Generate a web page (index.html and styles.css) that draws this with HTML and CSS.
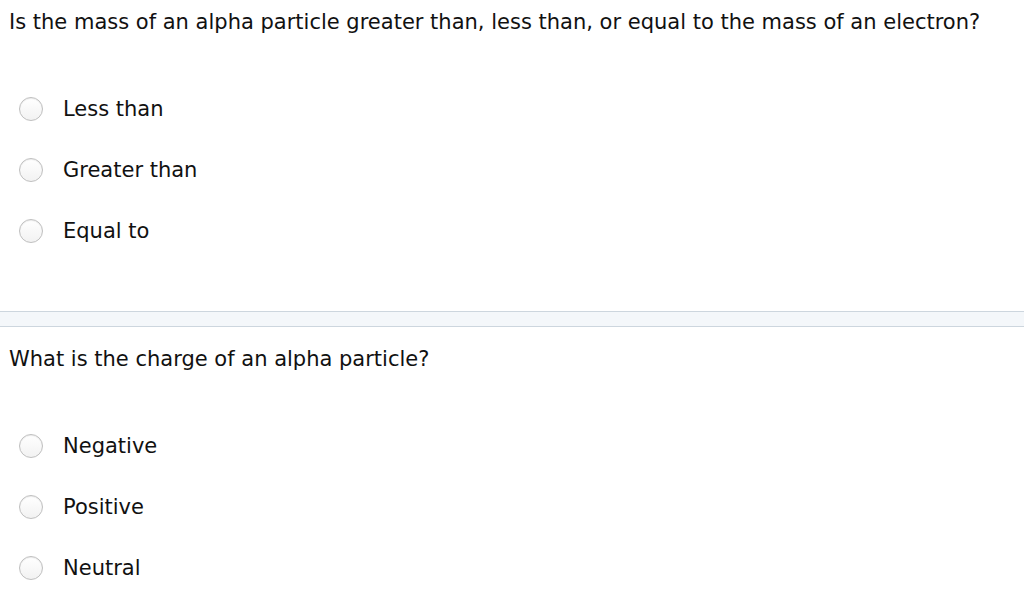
FILE: index.html
```html
<!DOCTYPE html>
<html>
<head>
<meta charset="utf-8">
<link rel="stylesheet" href="styles.css">
</head>
<body>
<section class="question">
  <p class="prompt">Is the mass of an alpha particle greater than, less than, or equal to the mass of an electron?</p>
  <ul class="options">
    <li class="option"><span class="radio"></span><span class="label">Less than</span></li>
    <li class="option"><span class="radio"></span><span class="label">Greater than</span></li>
    <li class="option"><span class="radio"></span><span class="label">Equal to</span></li>
  </ul>
</section>
<div class="divider"></div>
<section class="question second">
  <p class="prompt">What is the charge of an alpha particle?</p>
  <ul class="options">
    <li class="option"><span class="radio"></span><span class="label">Negative</span></li>
    <li class="option"><span class="radio"></span><span class="label">Positive</span></li>
    <li class="option"><span class="radio"></span><span class="label">Neutral</span></li>
  </ul>
</section>
</body>
</html>
```
FILE: styles.css
```css
html, body {
  margin: 0;
  padding: 0;
  background: #ffffff;
}
body {
  font-family: "DejaVu Sans", Verdana, sans-serif;
  font-size: 21px;
  color: #111111;
  width: 1024px;
  height: 608px;
  overflow: hidden;
}
.question {
  padding: 0 0 0 9px;
}
.prompt {
  margin: 0;
  padding-top: 10px;
  line-height: 24px;
  height: 24px;
  white-space: nowrap;
}
.options {
  list-style: none;
  margin: 0;
  padding: 0;
  margin-top: 63px;
}
.option {
  display: flex;
  align-items: center;
  height: 24px;
  margin-bottom: 37px;
}
.option:last-child {
  margin-bottom: 0;
}
.radio {
  width: 22px;
  height: 22px;
  border: 1px solid #bfbfbf;
  border-radius: 50%;
  background: linear-gradient(#ffffff, #f2f2f2);
  box-shadow: inset 0 1px 1px rgba(0,0,0,0.08);
  margin-left: 10px;
  flex: none;
}
.label {
  margin-left: 20px;
  line-height: 24px;
}
.divider {
  margin-top: 68px;
  height: 14px;
  background: #f4f7fa;
  border-top: 1px solid #cdd6de;
  border-bottom: 1px solid #cdd6de;
}
.second .prompt {
  padding-top: 20px;
}
.second .options {
  margin-top: 63px;
}
```
